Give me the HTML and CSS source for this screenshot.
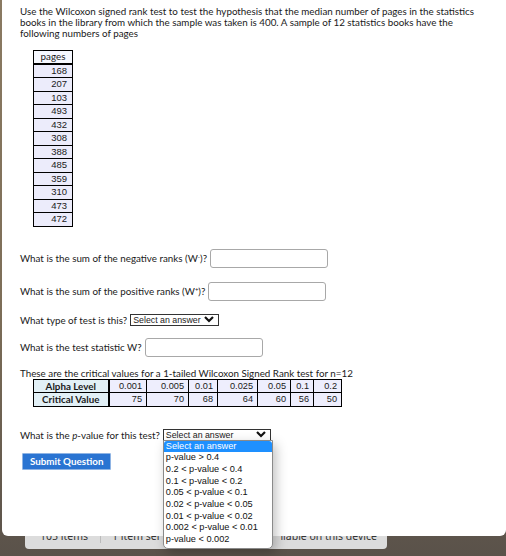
FILE: index.html
```html
<!DOCTYPE html>
<html>
<head>
<meta charset="utf-8">
<link rel="stylesheet" href="styles.css">
</head>
<body>
<div class="stage">
  <div class="window">
    <p class="intro">Use the Wilcoxon signed rank test to test the hypothesis that the median number of pages in the statistics books in the library from which the sample was taken is 400. A sample of 12 statistics books have the following numbers of pages</p>

    <table class="pages">
      <thead><tr><th>pages</th></tr></thead>
      <tbody>
        <tr><td>168</td></tr>
        <tr><td>207</td></tr>
        <tr><td>103</td></tr>
        <tr><td>493</td></tr>
        <tr><td>432</td></tr>
        <tr><td>308</td></tr>
        <tr><td>388</td></tr>
        <tr><td>485</td></tr>
        <tr><td>359</td></tr>
        <tr><td>310</td></tr>
        <tr><td>473</td></tr>
        <tr><td>472</td></tr>
      </tbody>
    </table>

    <div class="q q1"><span>What is the sum of the negative ranks (W<sup>-</sup>)?</span><span class="input"></span></div>
    <div class="q q2"><span>What is the sum of the positive ranks (W<sup>+</sup>)?</span><span class="input"></span></div>
    <div class="q q3"><span>What type of test is this?</span>
      <span class="select sel-short"><span>Select an answer</span><svg class="chev" viewBox="0 0 10 7" width="10" height="7"><polyline points="1,1 5,5 9,1" fill="none" stroke="#111" stroke-width="2.2"/></svg></span>
    </div>
    <div class="q q4"><span>What is the test statistic W?</span><span class="input"></span></div>

    <p class="crit-title">These are the critical values for a 1-tailed Wilcoxon Signed Rank test for n=12</p>
    <table class="crit">
      <colgroup>
        <col class="w-h"><col class="w1"><col class="w2"><col class="w3"><col class="w4"><col class="w5"><col class="w6"><col class="w7">
      </colgroup>
      <tr><th>Alpha Level</th><td>0.001</td><td>0.005</td><td>0.01</td><td>0.025</td><td>0.05</td><td>0.1</td><td>0.2</td></tr>
      <tr><th>Critical Value</th><td>75</td><td>70</td><td>68</td><td>64</td><td>60</td><td>56</td><td>50</td></tr>
    </table>

    <div class="q q5"><span>What is the <i>p</i>-value for this test?</span>
      <span class="select sel-long"><span>Select an answer</span><svg class="chev" viewBox="0 0 10 7" width="10" height="7"><polyline points="1,1 5,5 9,1" fill="none" stroke="#111" stroke-width="2.2"/></svg>
        <ul class="dropdown">
          <li class="active">Select an answer</li>
          <li>p-value &gt; 0.4</li>
          <li>0.2 &lt; p-value &lt; 0.4</li>
          <li>0.1 &lt; p-value &lt; 0.2</li>
          <li>0.05 &lt; p-value &lt; 0.1</li>
          <li>0.02 &lt; p-value &lt; 0.05</li>
          <li>0.01 &lt; p-value &lt; 0.02</li>
          <li>0.002 &lt; p-value &lt; 0.01</li>
          <li>p-value &lt; 0.002</li>
        </ul>
      </span>
    </div>

    <div class="btn-row"><span class="btn">Submit Question</span></div>
  </div>
  <div class="taskbar">
    <span class="tb-a">105 items</span>
    <span class="tb-sep"></span>
    <span class="tb-b">1 item sel</span>
    <span class="tb-c"><span>ilable on this device</span></span>
  </div>
</div>
</body>
</html>
```

FILE: styles.css
```css
html, body {
  margin: 0;
  padding: 0;
}
body {
  width: 506px;
  height: 556px;
  overflow: hidden;
  background: #4a4038;
}
.stage {
  width: 506px;
  height: 556px;
  background: linear-gradient(180deg, #8a7a62 0%, #7d6e58 55%, #5a524a 100%);
}
.window {
  position: relative;
  z-index: 2;
  margin-left: 2px;
  width: 504px;
  height: 536px;
  box-sizing: border-box;
  background: #fff;
  border-radius: 0 0 6px 6px;
  padding: 6px 0 0 18px;
  font-family: "Lato", "Liberation Sans", sans-serif;
  font-size: 9.8px;
  color: #1a1a1a;
}
.intro {
  margin: 0;
  width: 464px;
  line-height: 11px;
}
.pages {
  margin: 11px 0 0 13px;
  border-collapse: collapse;
  width: 40px;
  font-family: "Liberation Sans", Arial, sans-serif;
  font-size: 9.5px;
}
.pages th {
  background: #f6f8ff;
  border: 1px solid #000;
  border-bottom: 2px solid #000;
  font-weight: normal;
  font-family: "Lato", "Liberation Sans", sans-serif;
  font-size: 9.8px;
  height: 11.5px;
  padding: 0;
  line-height: 11px;
  text-align: center;
}
.pages td {
  background: #ececfb;
  border: 1px solid #000;
  height: 12.5px;
  padding: 0 5px 0 0;
  line-height: 12px;
  text-align: right;
}
.q {
  display: flex;
  align-items: center;
  gap: 3px;
}
.q sup {
  font-size: 6px;
  vertical-align: 3px;
  line-height: 0;
}
.q1 { margin-top: 22px; height: 19px; }
.q2 { margin-top: 14px; height: 19px; }
.q3 { margin-top: 9px; height: 20px; }
.q4 { margin-top: 8px; height: 19px; }
.q5 { margin-top: 22px; height: 12px; }
.input {
  display: block;
  width: 118px;
  height: 19px;
  box-sizing: border-box;
  border: 1px solid #a8a8a8;
  border-radius: 3px;
  background: #fff;
}
.select {
  position: relative;
  display: flex;
  align-items: center;
  justify-content: space-between;
  height: 12px;
  box-sizing: border-box;
  border: 1px solid #333;
  padding: 0 4px 0 2px;
  font-family: "Liberation Sans", Arial, sans-serif;
  font-size: 8.8px;
  background: #fff;
}
.sel-short { width: 89px; }
.sel-long { width: 108px; }
.chev { display: block; }
.crit-title {
  margin: 10px 0 0 0;
  line-height: 12px;
}
.crit {
  margin-left: 13px;
  border-collapse: collapse;
  table-layout: fixed;
  width: 308px;
}
.crit col.w-h { width: 75px; }
.crit col.w1 { width: 38px; }
.crit col.w2 { width: 42px; }
.crit col.w3 { width: 29px; }
.crit col.w4 { width: 40px; }
.crit col.w5 { width: 33px; }
.crit col.w6 { width: 23px; }
.crit col.w7 { width: 28px; }
.crit th {
  background: #e2f0f6;
  border: 1px solid #000;
  border-right-width: 2px;
  padding: 0;
  height: 12.5px;
  line-height: 12px;
  text-align: center;
}
.crit td {
  background: #eeeefd;
  border: 1px solid #000;
  padding: 0 4px 0 2px;
  height: 12.5px;
  line-height: 12px;
  text-align: right;
  font-family: "Liberation Sans", Arial, sans-serif;
  font-size: 9.2px;
}
.dropdown {
  position: absolute;
  left: -1px;
  top: 10px;
  width: 108px;
  margin: 0;
  padding: 0 0 2px 0;
  list-style: none;
  background: #fff;
  border: 1px solid #8a8a8a;
  border-radius: 0 0 5px 5px;
  box-shadow: 3px 4px 12px rgba(0,0,0,0.25);
  font-family: "Liberation Sans", Arial, sans-serif;
  font-size: 9.2px;
  color: #111;
}
.dropdown li {
  height: 11.7px;
  line-height: 11.7px;
  padding-left: 2px;
  white-space: nowrap;
}
.dropdown li.active {
  background: #1e90ff;
  color: #fff;
  border-radius: 3px 3px 0 0;
}
.btn-row {
  margin-top: 12px;
  padding-left: 2px;
}
.btn {
  display: inline-block;
  height: 15px;
  line-height: 15px;
  padding: 0 7px;
  background: #2a74d2;
  color: #fff;
  font-weight: bold;
  border: 1px solid #8fb4e4;
  border-radius: 1px;
}
.taskbar {
  position: relative;
  z-index: 1;
  margin: -12px 0 0 25px;
  width: 362px;
  height: 25px;
  box-sizing: border-box;
  padding-top: 5px;
  background: #dcdcdc;
  border-radius: 0 0 4px 4px;
  display: flex;
  align-items: flex-start;
  font-family: "Noto Sans", "Liberation Sans", sans-serif;
  font-size: 10.5px;
  color: #333;
  white-space: nowrap;
}
.tb-a { margin-left: 15px; }
.tb-sep { width: 1px; height: 14px; background: #bbb; margin: 0 11px 0 12px; }
.tb-c { margin-left: auto; margin-right: 10px; }
```
